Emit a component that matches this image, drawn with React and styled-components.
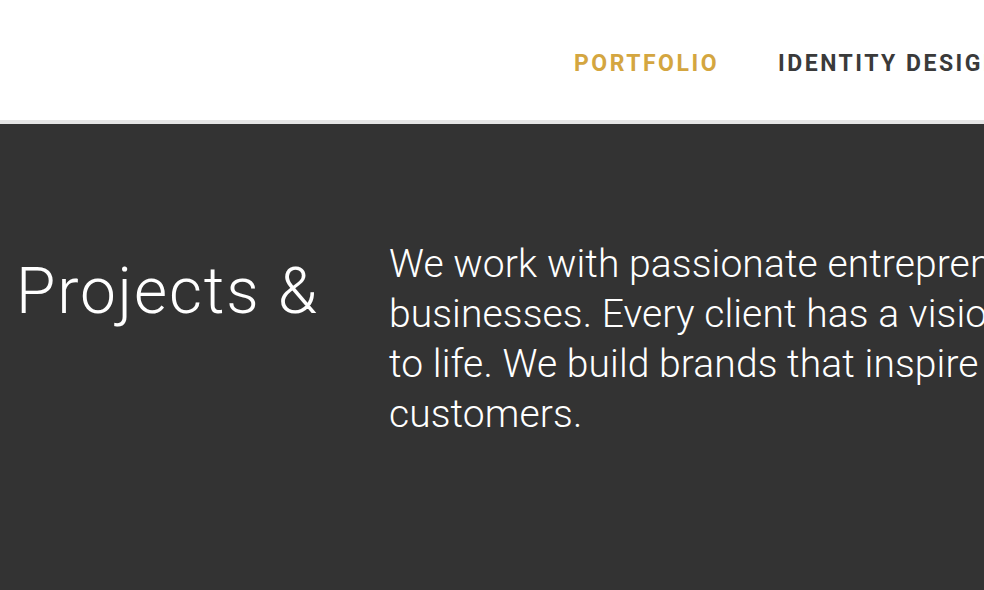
import styled, { createGlobalStyle } from "styled-components";

const GlobalStyle = createGlobalStyle`
  html, body {
    margin: 0;
    padding: 0;
    overflow: hidden;
    background: #333333;
  }
  body {
    font-family: Roboto, "Liberation Sans", sans-serif;
  }
`;

const navItems = [
  { label: "PORTFOLIO", active: true },
  { label: "IDENTITY DESIGN" },
  { label: "WEB DESIGN" },
];

export default function App() {
  return (
    <>
      <GlobalStyle />
      <Page>
        <Header>
          <Nav>
            {navItems.map((item) => (
              <NavLink key={item.label} $active={item.active}>
                {item.label}
              </NavLink>
            ))}
          </Nav>
        </Header>
        <Hero>
          <Title>Projects &amp;</Title>
          <Intro>
            <Line>We work with passionate entrepreneurs and small</Line>
            <Line>businesses. Every client has a vision we help bring</Line>
            <Line>to life. We build brands that inspire and connect with</Line>
            <Line>customers.</Line>
          </Intro>
        </Hero>
      </Page>
    </>
  );
}

const Page = styled.div`
  width: 1400px;
  min-height: 590px;
  background: #333333;
`;

const Header = styled.header`
  height: 120px;
  background: #ffffff;
  border-bottom: 4px solid #e5e5e5;
  display: flex;
  align-items: center;
  padding-left: 574px;
`;

const Nav = styled.nav`
  display: flex;
  gap: 59px;
  margin-top: 6px;
`;

const NavLink = styled.a`
  font-size: 23px;
  font-weight: 700;
  letter-spacing: 2.5px;
  white-space: nowrap;
  color: ${(p) => (p.$active ? "#d4a640" : "#3a3a3a")};
  cursor: pointer;
`;

const Hero = styled.section`
  display: flex;
  align-items: flex-start;
  padding: 115px 0 0 16px;
`;

const Title = styled.h1`
  margin: 0;
  width: 373px;
  flex: none;
  font-size: 64px;
  font-weight: 300;
  letter-spacing: 1.8px;
  line-height: 1.2;
  padding-top: 15px;
  color: #ffffff;
  white-space: nowrap;
`;

const Intro = styled.p`
  margin: 0;
  font-size: 39px;
  font-weight: 300;
  letter-spacing: 0.1px;
  line-height: 50px;
  color: #ffffff;
`;

const Line = styled.span`
  display: block;
  white-space: nowrap;
`;
